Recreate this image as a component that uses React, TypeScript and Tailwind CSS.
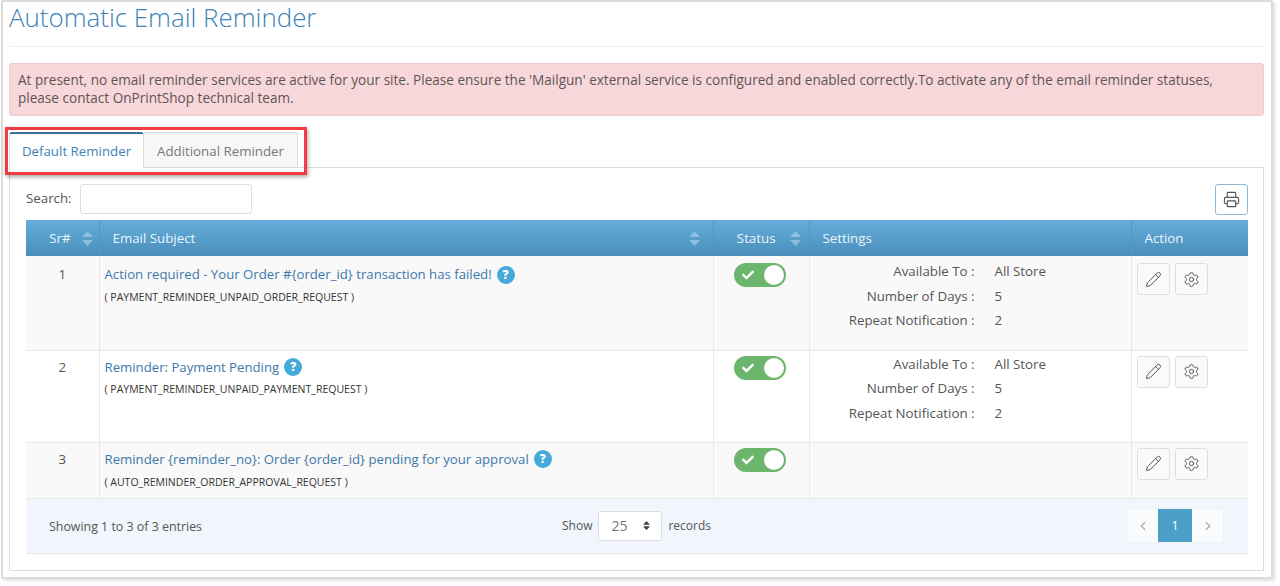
import { Pencil, Settings, Printer, ChevronLeft, ChevronRight } from "lucide-react";
import { FaCheck, FaSort } from "react-icons/fa";

const ROWS = [
  {
    sr: 1,
    subject: "Action required - Your Order #{order_id} transaction has failed!",
    code: "PAYMENT_REMINDER_UNPAID_ORDER_REQUEST",
    settings: true,
    height: "h-[94px]",
    bg: "bg-[#f9f9f9]",
    textTop: "pt-[9px]",
    codeGap: "mt-[5px]",
    ctrlTop: "pt-[7px]",
    setTop: "pt-[3px]",
  },
  {
    sr: 2,
    subject: "Reminder: Payment Pending",
    code: "PAYMENT_REMINDER_UNPAID_PAYMENT_REQUEST",
    settings: true,
    height: "h-[92px]",
    bg: "bg-white",
    textTop: "pt-[7px]",
    codeGap: "mt-[5px]",
    ctrlTop: "pt-[5px]",
    setTop: "pt-[1px]",
  },
  {
    sr: 3,
    subject: "Reminder {reminder_no}: Order {order_id} pending for your approval",
    code: "AUTO_REMINDER_ORDER_APPROVAL_REQUEST",
    settings: false,
    height: "h-[56px]",
    bg: "bg-[#f9f9f9]",
    textTop: "pt-[7px]",
    codeGap: "mt-[6px]",
    ctrlTop: "pt-[5px]",
    setTop: "pt-[1px]",
  },
];

function SortArrows() {
  return (
    <svg width="11" height="15" viewBox="0 0 11 15" className="fill-[#8fbfe0]">
      <path d="M5.5 0L11 6H0z" />
      <path d="M5.5 15L0 9h11z" />
    </svg>
  );
}

function Help() {
  return (
    <span className="ml-[5px] inline-flex h-[18px] w-[18px] shrink-0 items-center justify-center rounded-full bg-[#45a9d9] text-[12px] font-extrabold text-white">
      ?
    </span>
  );
}

function Toggle() {
  return (
    <div className="flex h-6 w-[52px] items-center justify-between rounded-full bg-[#6cb56c] pl-2 pr-[2px]">
      <FaCheck className="text-[12px] text-white" />
      <span className="h-5 w-5 rounded-full bg-white" />
    </div>
  );
}

function SquareButton({ children, w }: { children: React.ReactNode; w: string }) {
  return (
    <button className={`flex h-8 ${w} items-center justify-center rounded-[3px] border border-[#dfdfdf] bg-[#fafafa] text-[#555]`}>
      {children}
    </button>
  );
}

export default function App() {
  return (
    <div className="relative h-[586px] w-[1280px] overflow-hidden bg-white font-['Open_Sans',sans-serif] text-[13.3px] text-[#555]">
      <div className="ml-[1px] h-[579px] w-[1272px] rounded-[2px] border-2 border-[#dcdcdc] pl-[6px] pr-[7px] shadow-[2px_2px_3px_rgba(0,0,0,0.12)]">
        <h1 className="text-[25.9px] leading-[31px] font-light text-[#3d83b8]">Automatic Email Reminder</h1>
        <div className="mt-[13px] border-t border-[#eeeeee]" />

        <div className="mt-4 h-[53px] rounded-[3px] border border-[#f3c9cf] bg-[#f8d7da] px-2 pt-[7px] text-[13.57px] leading-[18px] text-[#5f5557]">
          At present, no email reminder services are active for your site. Please ensure the 'Mailgun' external service is configured and enabled correctly.To activate any of the email reminder statuses, please contact OnPrintShop technical team.
        </div>

        <div className="relative z-10 mt-[16px] flex h-[36px] items-stretch">
          <div className="flex w-[135px] items-center justify-center rounded-t-[3px] border-x border-t-2 border-[#dcdcdc] border-t-[#3d6f9b] bg-white pt-[1px] text-[#3d83b8]">Default Reminder</div>
          <div className="flex w-[154px] items-center justify-center border-t border-r border-b border-[#dcdcdc] bg-[#f7f7f7] pt-[3px] text-[#777]">Additional Reminder</div>
        </div>

        <div className="-mt-px h-[404px] border border-[#dcdcdc] pt-[16px] pr-[15px] pl-4">
          <div className="flex h-[36px] items-start justify-between">
            <label className="flex items-center gap-[8px] text-[#555]">
              Search:
              <input className="h-[30px] w-[172px] rounded-[3px] border border-[#dddddd] bg-white" />
            </label>
            <button className="flex h-[31px] w-[33px] items-center justify-center rounded-[3px] border border-[#8db8d8] bg-white text-[#555]">
              <Printer size={17} strokeWidth={1.6} />
            </button>
          </div>

          <table className="w-[1222px] table-fixed border-collapse">
            <thead>
              <tr className="h-[36px] bg-gradient-to-b from-[#66addb] to-[#4a8fba] text-left font-normal text-[#eaf4fb]">
                <th className="w-[73px] border-r border-[#5796c0] pt-[1px] pr-[6px] font-normal">
                  <div className="flex items-center justify-end gap-[11px]"><span>Sr#</span><SortArrows /></div>
                </th>
                <th className="w-[614px] border-r border-[#5796c0] px-[13px] pt-[1px] font-normal">
                  <div className="flex items-center justify-between"><span>Email Subject</span><SortArrows /></div>
                </th>
                <th className="w-[96px] border-r border-[#5796c0] pt-[1px] pr-[8px] font-normal">
                  <div className="flex items-center justify-end gap-[14px]"><span>Status</span><SortArrows /></div>
                </th>
                <th className="w-[322px] border-r border-[#5796c0] px-[13px] pt-[1px] font-normal">Settings</th>
                <th className="px-[13px] pt-[1px] font-normal">Action</th>
              </tr>
            </thead>
            <tbody>
              {ROWS.map((r) => (
                <tr key={r.sr} className={`${r.height} ${r.bg} border-b border-[#e8e8e8] align-top`}>
                  <td className={`border-r border-[#e8e8e8] ${r.textTop} text-center`}>{r.sr}</td>
                  <td className={`border-r border-[#e8e8e8] px-[5px] ${r.textTop}`}>
                    <div className="flex items-center text-[13.2px] text-[#3d78ab]">
                      {r.subject}
                      <Help />
                    </div>
                    <div className={`${r.codeGap} text-[10.5px] text-[#333]`}>( {r.code} )</div>
                  </td>
                  <td className={`border-r border-[#e8e8e8] ${r.ctrlTop}`}>
                    <div className="flex justify-center pr-[2px]"><Toggle /></div>
                  </td>
                  <td className={`border-r border-[#e8e8e8] ${r.setTop}`}>
                    {r.settings && (
                      <div className="grid grid-cols-[165px_1fr] gap-x-[20px] leading-[24.5px]">
                        <span className="text-right">Available To :</span><span>All Store</span>
                        <span className="text-right">Number of Days :</span><span>5</span>
                        <span className="text-right">Repeat Notification :</span><span>2</span>
                      </div>
                    )}
                  </td>
                  <td className={`${r.ctrlTop} pl-[5px]`}>
                    <div className="flex gap-[5px]">
                      <SquareButton w="w-[33px]"><Pencil size={17} strokeWidth={1.4} /></SquareButton>
                      <SquareButton w="w-[33px]"><Settings size={17} strokeWidth={1.4} /></SquareButton>
                    </div>
                  </td>
                </tr>
              ))}
            </tbody>
          </table>

          <div className="flex h-[55px] w-[1222px] items-center border-b border-[#e4e8ec] bg-[#f0f6fb] pr-[24px] pl-[23px]">
            <span className="w-[513px] pt-[3px] text-[12.4px] text-[#555]">Showing 1 to 3 of 3 entries</span>
            <div className="flex flex-1 items-center text-[12px] text-[#555]">
              Show
              <div className="mx-[6px] flex h-[30px] w-[64px] items-center justify-between rounded-[3px] border border-[#dddddd] bg-white pr-[9px] pl-[12px] text-[14px] text-[#777]">
                25 <FaSort className="text-[11px] text-[#444]" />
              </div>
              records
            </div>
            <div className="flex h-[35px] items-stretch rounded-[3px] border border-[#f0f3f6] bg-[#f9fbfd]">
              <span className="flex w-[31px] items-center justify-center text-[#aaa]"><ChevronLeft size={14} /></span>
              <span className="flex w-[34px] items-center justify-center bg-[#4b9fc9] text-white">1</span>
              <span className="flex w-[31px] items-center justify-center text-[#aaa]"><ChevronRight size={14} /></span>
            </div>
          </div>
        </div>
      </div>

      {/* red annotation around the tabs */}
      <div className="absolute top-[127px] left-[5px] z-20 h-[48px] w-[302px] border-[3px] border-[#f03c42] shadow-[1px_2px_4px_rgba(0,0,0,0.35)]" />
    </div>
  );
}
